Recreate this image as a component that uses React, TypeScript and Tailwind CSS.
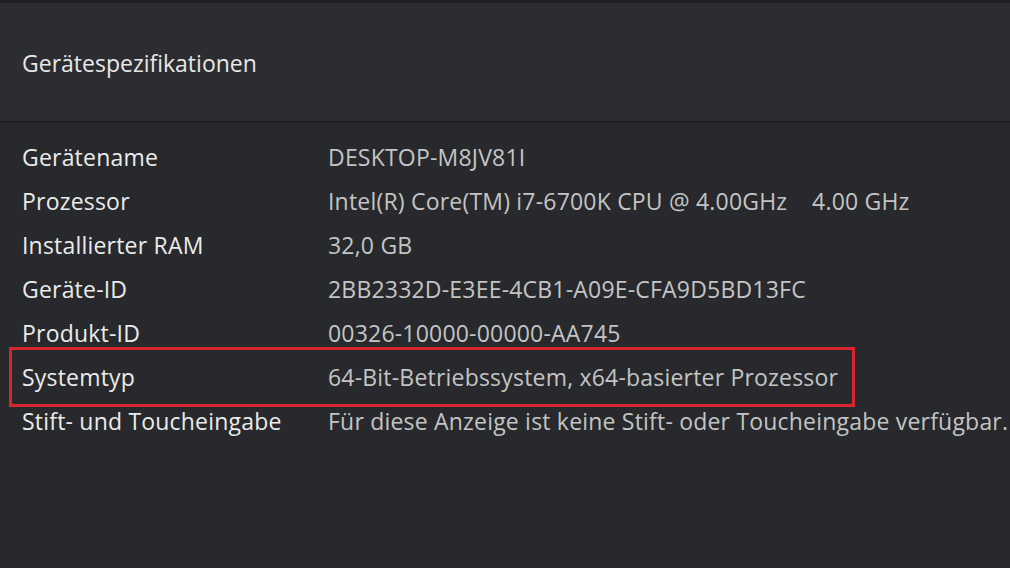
import React from "react";

const rows: [string, string][] = [
  ["Gerätename", "DESKTOP-M8JV81I"],
  ["Prozessor", "Intel(R) Core(TM) i7-6700K CPU @ 4.00GHz    4.00 GHz"],
  ["Installierter RAM", "32,0 GB"],
  ["Geräte-ID", "2BB2332D-E3EE-4CB1-A09E-CFA9D5BD13FC"],
  ["Produkt-ID", "00326-10000-00000-AA745"],
  ["Systemtyp", "64-Bit-Betriebssystem, x64-basierter Prozessor"],
  ["Stift- und Toucheingabe", "Für diese Anzeige ist keine Stift- oder Toucheingabe verfügbar."],
];

export default function App() {
  return (
    <div
      className="w-[1010px] h-[568px] overflow-hidden bg-[#27292c] flex flex-col"
      style={{ fontFamily: '"Open Sans", "Noto Sans", sans-serif' }}
    >
      <div className="h-[3px] bg-[#1f2022]" />
      <div className="h-[118px] bg-[#2c2d30] flex items-center px-[22px] pt-[2px]">
        <span className="text-[23px] text-[#e8e8e8]">Gerätespezifikationen</span>
      </div>
      <div className="h-[2px] bg-[#1e1f21]" />
      <div className="flex flex-col pt-[12px]">
        {rows.map(([k, v]) => (
          <div key={k} className="relative h-[44px] flex items-center whitespace-pre">
            {k === "Systemtyp" && (
              <div className="absolute left-[9px] w-[846px] top-[-8px] bottom-[-8px] border-[3px] border-[#d9252e]" />
            )}
            <span className="w-[328px] pl-[22px] text-[23px] tracking-[0.2px] text-[#ebebeb]">{k}</span>
            <span className="text-[23px] tracking-[0.2px] text-[#c4c4c4]">{v}</span>
          </div>
        ))}
      </div>
    </div>
  );
}
